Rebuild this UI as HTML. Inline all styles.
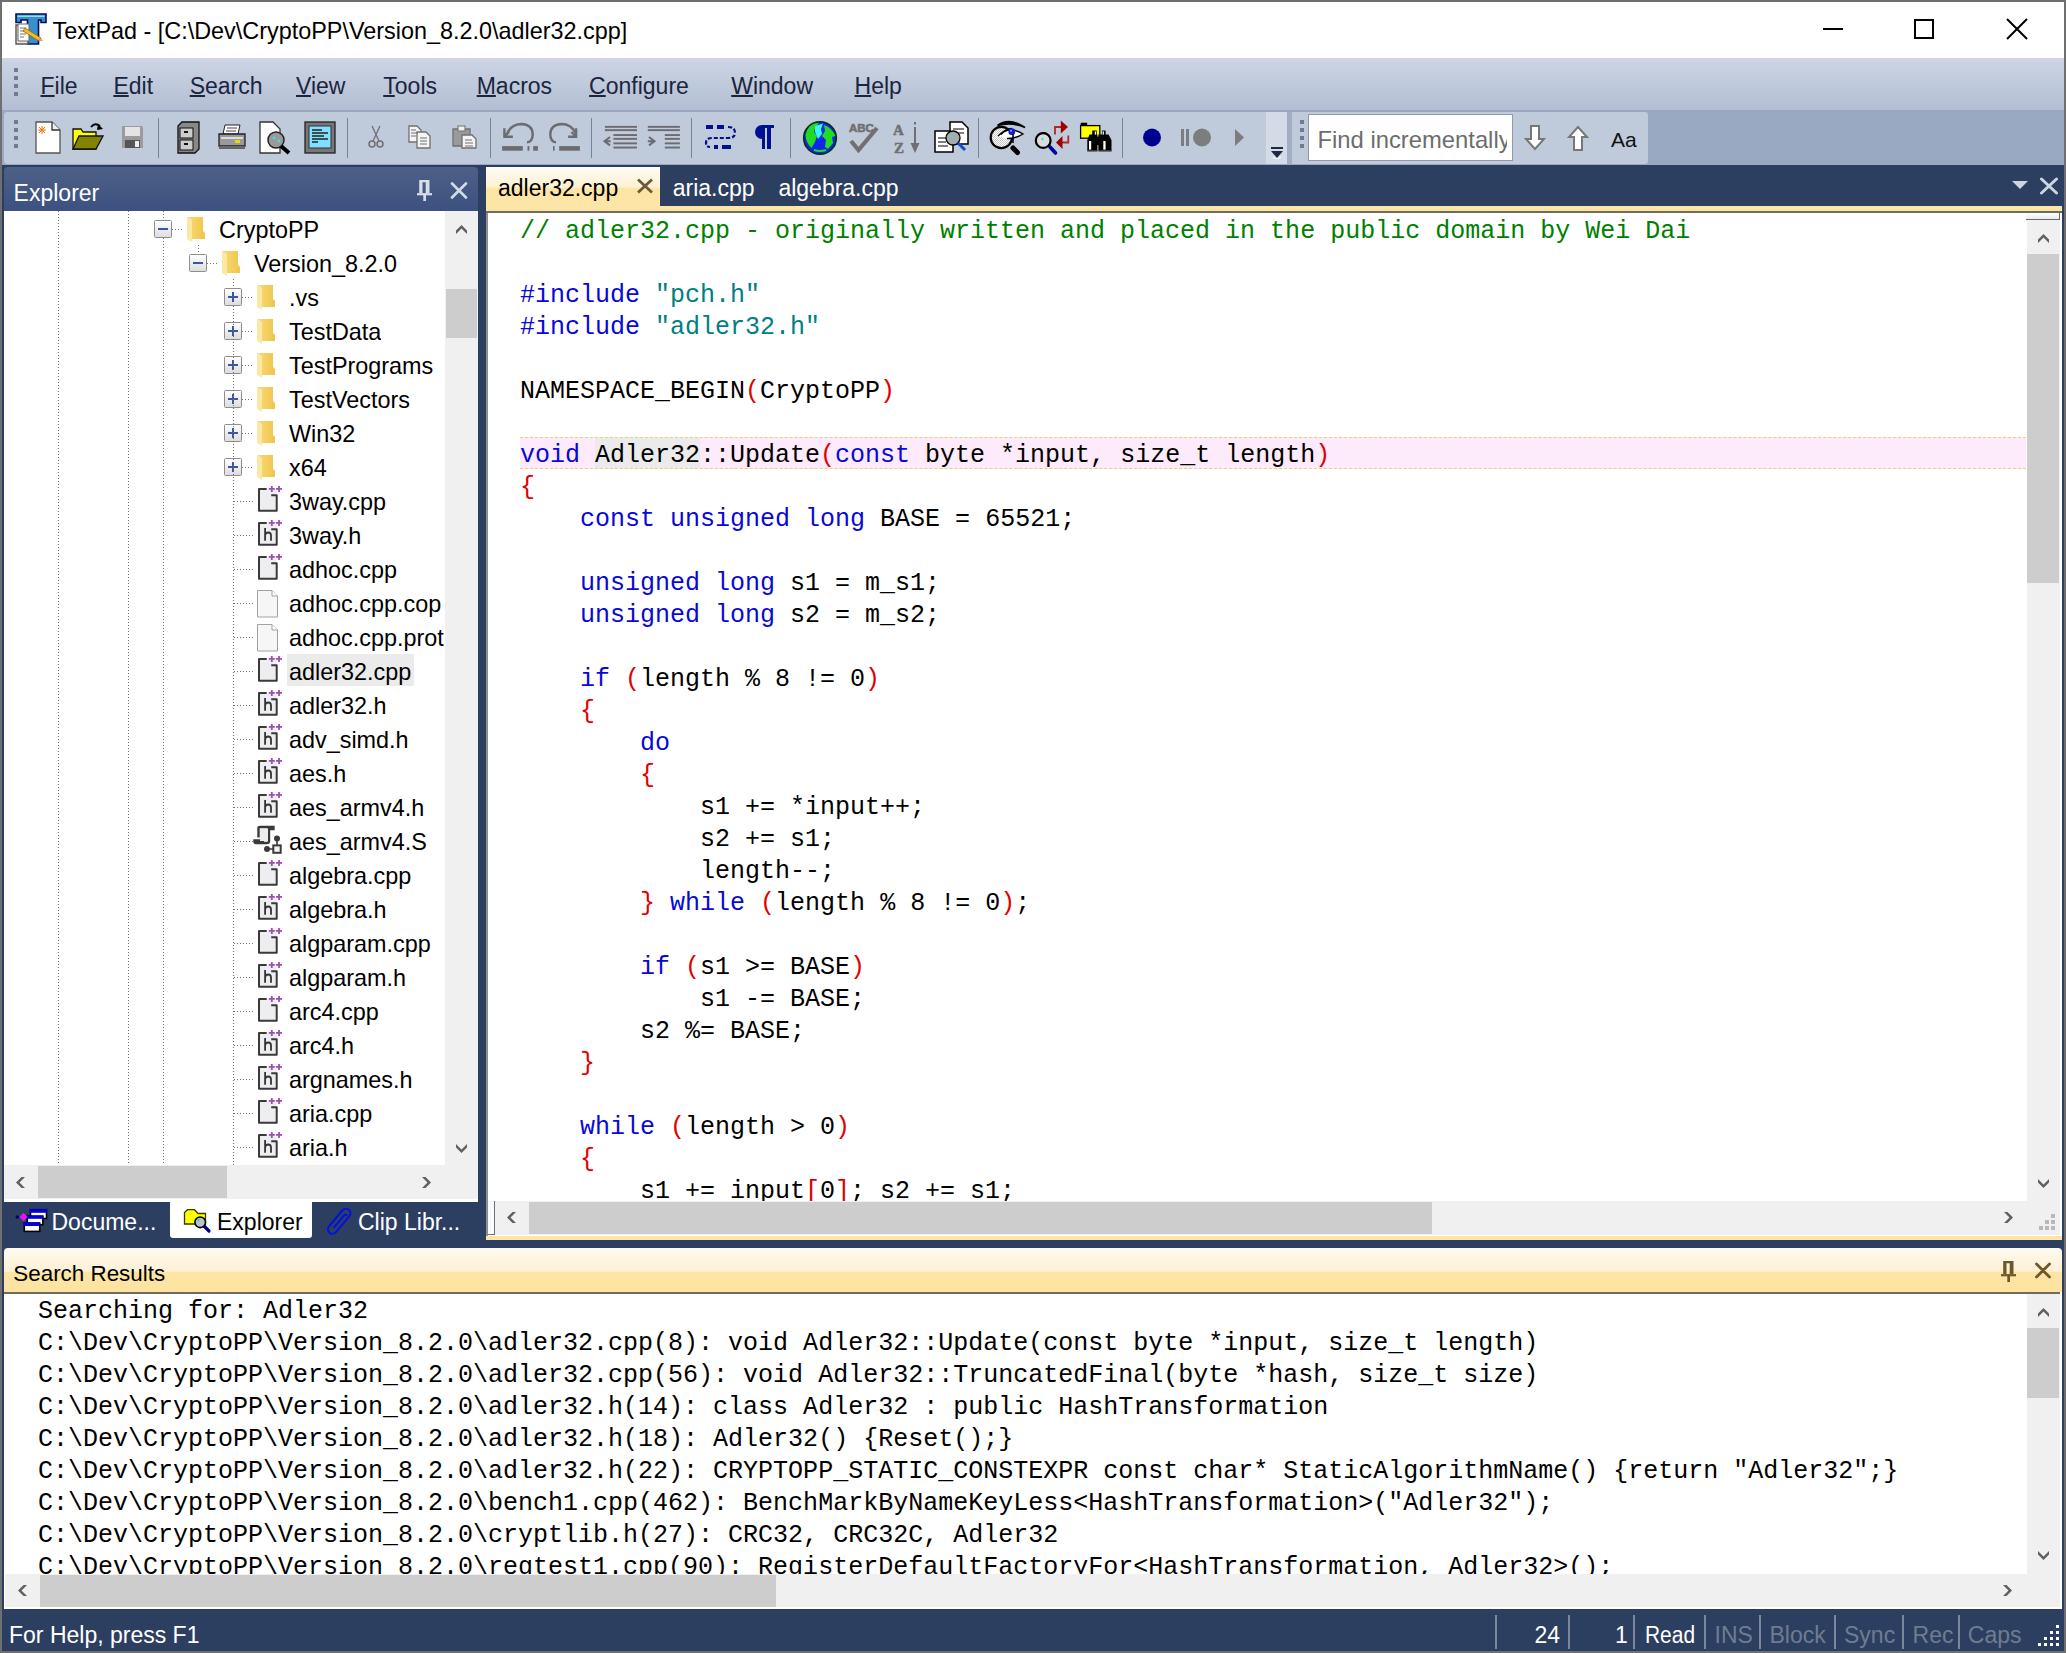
<!DOCTYPE html><html><head><meta charset="utf-8"><style>
*{margin:0;padding:0;box-sizing:border-box}
html,body{width:2066px;height:1653px;overflow:hidden;background:#6f6f6f;font-family:"Liberation Sans",sans-serif;position:relative}
div,svg.a{position:absolute}
.t{white-space:pre;line-height:1}
.mono{font-family:"Liberation Mono",monospace;font-size:25px;white-space:pre;line-height:32px;color:#000}
.kw{color:#0808d8}.cm{color:#008000}.st{color:#008080}.br{color:#e00000}
</style></head><body>
<div style="left:2px;top:2px;width:2062px;height:1649px;background:#2d3f61;"></div>
<div style="left:2px;top:2px;width:2062px;height:56px;background:#fff;"></div>
<svg class="a" style="left:15px;top:13px;" width="32" height="32" viewBox="0 0 32 32">
<path d="M1 1H31V9.5H26V7H23.5V31H12.5V7H6V9.5H1Z" fill="#3a8fd0" stroke="#001060" stroke-width="1.6"/>
<path d="M2.5 2.5H29.5V4H2.5Z" fill="#8fe0ff"/>
<path d="M1 12H13V31H1Z" fill="#e8e8e8" stroke="#555" stroke-width="1.4"/>
<path d="M3 11H14V28H3Z" fill="#fff" stroke="#666" stroke-width="1"/>
<path d="M5 15H11M5 18H10M5 21H11M5 24H9" stroke="#777" stroke-width="1"/>
<path d="M10 15L26 25L24 28L8 18Z" fill="#f0c020" stroke="#a06000" stroke-width="0.8"/>
<path d="M26 25L28 28L24 28Z" fill="#f09090"/>
</svg>
<div class="t " style="left:52.5px;top:19.69px;font-size:23.4px;color:#000;">TextPad - [C:\Dev\CryptoPP\Version_8.2.0\adler32.cpp]</div>
<div style="left:1823px;top:28px;width:20px;height:2px;background:#000;"></div>
<div style="left:1914px;top:19px;width:20px;height:20px;background:transparent;border:2px solid #000"></div>
<svg class="a" style="left:2006px;top:18px;" width="22" height="22" viewBox="0 0 22 22"><path d="M1 1L21 21M21 1L1 21" stroke="#000" stroke-width="2"/></svg>
<div style="left:2px;top:58px;width:2062px;height:52px;background:linear-gradient(#cbd5e4,#b3bed3);"></div>
<div style="left:14px;top:68px;width:4px;height:4px;background:#6d7b93;"></div>
<div style="left:14px;top:76px;width:4px;height:4px;background:#6d7b93;"></div>
<div style="left:14px;top:84px;width:4px;height:4px;background:#6d7b93;"></div>
<div style="left:14px;top:92px;width:4px;height:4px;background:#6d7b93;"></div>
<div class="t " style="left:40.5px;top:74.53px;font-size:23px;color:#1b2540;"><u style="text-decoration-thickness:1.6px;text-underline-offset:1px;text-decoration-skip-ink:none">F</u>ile</div>
<div class="t " style="left:113.4px;top:74.53px;font-size:23px;color:#1b2540;"><u style="text-decoration-thickness:1.6px;text-underline-offset:1px;text-decoration-skip-ink:none">E</u>dit</div>
<div class="t " style="left:189.7px;top:74.53px;font-size:23px;color:#1b2540;"><u style="text-decoration-thickness:1.6px;text-underline-offset:1px;text-decoration-skip-ink:none">S</u>earch</div>
<div class="t " style="left:296px;top:74.53px;font-size:23px;color:#1b2540;"><u style="text-decoration-thickness:1.6px;text-underline-offset:1px;text-decoration-skip-ink:none">V</u>iew</div>
<div class="t " style="left:383.3px;top:74.53px;font-size:23px;color:#1b2540;"><u style="text-decoration-thickness:1.6px;text-underline-offset:1px;text-decoration-skip-ink:none">T</u>ools</div>
<div class="t " style="left:476.7px;top:74.53px;font-size:23px;color:#1b2540;"><u style="text-decoration-thickness:1.6px;text-underline-offset:1px;text-decoration-skip-ink:none">M</u>acros</div>
<div class="t " style="left:589.1px;top:74.53px;font-size:23px;color:#1b2540;"><u style="text-decoration-thickness:1.6px;text-underline-offset:1px;text-decoration-skip-ink:none">C</u>onfigure</div>
<div class="t " style="left:731.2px;top:74.53px;font-size:23px;color:#1b2540;"><u style="text-decoration-thickness:1.6px;text-underline-offset:1px;text-decoration-skip-ink:none">W</u>indow</div>
<div class="t " style="left:854.6px;top:74.53px;font-size:23px;color:#1b2540;"><u style="text-decoration-thickness:1.6px;text-underline-offset:1px;text-decoration-skip-ink:none">H</u>elp</div>
<div style="left:2px;top:110px;width:2062px;height:55px;background:#9aa9c2;"></div>
<div style="left:4px;top:112px;width:1262px;height:52px;background:#bfcadb;border-radius:3px 0 0 3px"></div>
<div style="left:1266px;top:112px;width:21px;height:52px;background:#d3dbe7;"></div>
<div style="left:1287px;top:112px;width:5px;height:52px;background:#a2aec3;"></div>
<div style="left:1292px;top:112px;width:356px;height:52px;background:#bfcadb;border-radius:0 3px 3px 0"></div>
<div style="left:14px;top:120px;width:4px;height:4px;background:#6d7b93;"></div>
<div style="left:1300px;top:120px;width:4px;height:4px;background:#6d7b93;"></div>
<div style="left:14px;top:128px;width:4px;height:4px;background:#6d7b93;"></div>
<div style="left:1300px;top:128px;width:4px;height:4px;background:#6d7b93;"></div>
<div style="left:14px;top:136px;width:4px;height:4px;background:#6d7b93;"></div>
<div style="left:1300px;top:136px;width:4px;height:4px;background:#6d7b93;"></div>
<div style="left:14px;top:144px;width:4px;height:4px;background:#6d7b93;"></div>
<div style="left:1300px;top:144px;width:4px;height:4px;background:#6d7b93;"></div>
<div style="left:158px;top:118px;width:1px;height:40px;background:#76839a;"></div>
<div style="left:347px;top:118px;width:1px;height:40px;background:#76839a;"></div>
<div style="left:490px;top:118px;width:1px;height:40px;background:#76839a;"></div>
<div style="left:591px;top:118px;width:1px;height:40px;background:#76839a;"></div>
<div style="left:691px;top:118px;width:1px;height:40px;background:#76839a;"></div>
<div style="left:790px;top:118px;width:1px;height:40px;background:#76839a;"></div>
<div style="left:978px;top:118px;width:1px;height:40px;background:#76839a;"></div>
<div style="left:1122px;top:118px;width:1px;height:40px;background:#76839a;"></div>
<svg class="a" style="left:35px;top:121px;" width="26" height="33" viewBox="0 0 26 33"><path d="M1 1H17L25 9V32H1Z" fill="#fff" stroke="#555" stroke-width="1.3"/><path d="M17 1V9H25" fill="#eee" stroke="#333" stroke-width="1.3"/><path d="M4 6L10 12M10 6L4 12M7 5V13M3 9H11" stroke="#f07000" stroke-width="1"/></svg>
<svg class="a" style="left:72px;top:121px;" width="32" height="32" viewBox="0 0 32 32"><path d="M1 8H9L11 11H24V28H1Z" fill="#ffff00" stroke="#111" stroke-width="1.3"/><path d="M1 28L7 15H31L24 28Z" fill="#848400" stroke="#111" stroke-width="1.3"/><path d="M19 6Q23 1 28 5" fill="none" stroke="#000" stroke-width="2"/><path d="M26 3L31 8L25 9Z" fill="#000"/></svg>
<svg class="a" style="left:121px;top:125px;" width="23" height="24" viewBox="0 0 23 24"><path d="M1 1H21L22 3V23H1Z" fill="#9b9b9b"/><rect x="4" y="2" width="15" height="9" fill="#e4e4e4"/><rect x="4" y="15" width="15" height="8" fill="#555"/><rect x="14" y="16" width="4" height="6" fill="#eee"/></svg>
<svg class="a" style="left:177px;top:121px;" width="23" height="33" viewBox="0 0 23 33"><path d="M1 5L5 1H22V28L18 32H1Z" fill="#888" stroke="#111" stroke-width="1.3"/><rect x="3" y="7" width="13" height="10" fill="#ccc" stroke="#111"/><rect x="3" y="19" width="13" height="10" fill="#ccc" stroke="#111"/><path d="M7 11H11M7 23H11" stroke="#111" stroke-width="2"/></svg>
<svg class="a" style="left:218px;top:124px;" width="28" height="26" viewBox="0 0 28 26"><path d="M7 1H22L20 10H5Z" fill="#fff" stroke="#222"/><path d="M9 4H19M8 7H18" stroke="#444"/><path d="M1 10H27V22H1Z" fill="#999" stroke="#222" stroke-width="1.3"/><path d="M3 14H25" stroke="#ddd" stroke-width="2"/><rect x="17" y="16" width="5" height="3" fill="#e0e000"/><path d="M1 22H27V25H1Z" fill="#666"/></svg>
<svg class="a" style="left:259px;top:121px;" width="34" height="34" viewBox="0 0 34 34"><path d="M1 1H14L21 8V32H1Z" fill="#fff" stroke="#333" stroke-width="1.3"/><circle cx="17" cy="19" r="8" fill="#9a9a9a" stroke="#222" stroke-width="1.5"/><path d="M14 16L16 18M19 19L21 21" stroke="#40e0e0" stroke-width="2"/><path d="M22 25L30 32" stroke="#000" stroke-width="4"/></svg>
<svg class="a" style="left:304px;top:121px;" width="32" height="33" viewBox="0 0 32 33"><rect x="1" y="1" width="30" height="31" fill="#777" stroke="#222" stroke-width="1.3"/><rect x="5" y="5" width="22" height="22" fill="#80e0ff" stroke="#333"/><path d="M8 9H18M8 12H24M8 15H20M8 18H24M8 21H14" stroke="#222" stroke-width="1.5"/></svg>
<svg class="a" style="left:368px;top:125px;" width="16" height="24" viewBox="0 0 16 24"><path d="M4 1L11 16M12 1L5 16" stroke="#707070" stroke-width="1.3" fill="none"/><circle cx="4" cy="19" r="3" fill="none" stroke="#707070" stroke-width="1.5"/><circle cx="12" cy="19" r="3" fill="none" stroke="#707070" stroke-width="1.5"/></svg>
<svg class="a" style="left:408px;top:125px;" width="24" height="24" viewBox="0 0 24 24"><path d="M1 1H9L13 5V17H1Z" fill="#f4f4f4" stroke="#707070" stroke-width="1.3"/><path d="M9 7H18L22 11V23H9Z" fill="#f4f4f4" stroke="#707070" stroke-width="1.3"/><path d="M3 5H8M3 8H10M3 11H8M12 13H19M12 16H19M12 19H19" stroke="#707070"/></svg>
<svg class="a" style="left:452px;top:125px;" width="25" height="24" viewBox="0 0 25 24"><path d="M1 4H18V21H1Z" fill="#9a9a9a" stroke="#707070" stroke-width="1.3" rx="2"/><rect x="6" y="1" width="7" height="5" fill="#eee" stroke="#707070"/><path d="M10 10H20L24 14V23H10Z" fill="#f4f4f4" stroke="#707070" stroke-width="1.3"/><path d="M13 15H20M13 18H21M13 21H21" stroke="#707070"/></svg>
<svg class="a" style="left:495px;top:115px;" width="195" height="45" viewBox="0 0 195 45"><g fill="none" stroke="#6c6c70" stroke-width="2.4"><path d="M12.3 18Q17 9 26.5 9Q37.5 9.5 37.7 19.5Q37.5 27 32 27.4"/><path d="M9.4 13.2V21.7H17.9M9.4 21.7L14 17"/><path d="M80.7 18Q76 9 66.5 9Q55.5 9.5 55.3 19.5Q55.5 27 61 27.4"/><path d="M81.1 13.2V21.7H73.1M81.1 21.7L76.5 17"/></g><g fill="#6c6c70"><rect x="7.1" y="31.1" width="20.7" height="4.6"/><rect x="32.5" y="31.1" width="1.9" height="4.6"/><rect x="38.2" y="31.1" width="4.7" height="4.6"/><rect x="64.2" y="31.1" width="20.7" height="4.6"/><rect x="58" y="31.1" width="1.6" height="4.6"/><rect x="109.9" y="10.9" width="32.1" height="1.9"/><rect x="109.9" y="14.2" width="32.1" height="1.9"/><rect x="118.4" y="19.1" width="23.6" height="1.9"/><rect x="118.4" y="22.9" width="23.6" height="1.9"/><rect x="118.4" y="27.4" width="23.6" height="1.9"/><rect x="118.4" y="31.6" width="23.6" height="1.9"/><rect x="152.8" y="10.9" width="32.1" height="1.9"/><rect x="152.8" y="14.2" width="32.1" height="1.9"/><rect x="169.8" y="19.1" width="15.1" height="1.9"/><rect x="169.8" y="22.9" width="15.1" height="1.9"/><rect x="169.8" y="27.4" width="15.1" height="1.9"/><rect x="169.8" y="31.6" width="15.1" height="1.9"/></g><g fill="none" stroke="#6c6c70" stroke-width="2"><path d="M115 22L109.5 26.2L115 30.4M109.5 26.2H115.6"/><path d="M154 22L159.5 26.2L154 30.4M152.8 26.2H159.5"/></g></svg>
<svg class="a" style="left:704px;top:124px;" width="33" height="26" viewBox="0 0 33 26"><path d="M2 3H9M13 3H20" stroke="#001090" stroke-width="4"/><path d="M24 3Q31 3 31 9Q31 14 24 14H8Q2 14 2 19Q2 23 6 23" fill="none" stroke="#001090" stroke-width="2.2" stroke-dasharray="4 2"/><path d="M10 23H14M18 23H27" stroke="#001090" stroke-width="4"/></svg>
<svg class="a" style="left:753px;top:124px;" width="22" height="26" viewBox="0 0 22 26"><path d="M9 1H21V4H18V25H14V4H12V25H9V15A7 7 0 0 1 9 1Z" fill="#001090"/></svg>
<svg class="a" style="left:802px;top:120px;" width="36" height="36" viewBox="0 0 36 36"><circle cx="18" cy="18" r="16.3" fill="#0c28e8" stroke="#063008" stroke-width="1.6"/><path d="M3.5 15Q5 7 12 3.5L17 3L13 8L12 12L15 16L13 22L9.5 28Q4 23 3.5 15Z" fill="#22dc22"/><path d="M13 6L21 3.5L19 9L20 14L16 19L13 12Z" fill="#38f4f4"/><path d="M22 5Q30 8 33.5 16L30 17L31 23L26 29L23 27L24 20L20 16L23 11Z" fill="#22dc22"/><path d="M12 30Q18 32 24 30" stroke="#22dc22" stroke-width="2" fill="none"/></svg>
<svg class="a" style="left:848px;top:121px;" width="31" height="32" viewBox="0 0 31 32"><text x="1" y="11" font-family="Liberation Sans" font-weight="700" font-size="11.5" fill="#707070" stroke="#707070" stroke-width="0.6">ABC</text><path d="M3 20L10.5 29L29 7" fill="none" stroke="#707070" stroke-width="4.2"/></svg>
<svg class="a" style="left:893px;top:121px;" width="29" height="34" viewBox="0 0 29 34"><text x="0" y="14" font-family="Liberation Serif" font-weight="700" font-size="15" fill="#707070" stroke="#707070" stroke-width="0.5">A</text><text x="1" y="32" font-family="Liberation Serif" font-weight="700" font-size="15" fill="#707070" stroke="#707070" stroke-width="0.5">Z</text><path d="M22 1V3.5M22 6V28" stroke="#707070" stroke-width="2"/><path d="M17.5 22H26.5L22 32Z" fill="#707070"/></svg>
<svg class="a" style="left:934px;top:121px;" width="36" height="32" viewBox="0 0 36 32"><path d="M16 1H28L34 7V23H16Z" fill="#fff" stroke="#000" stroke-width="1.5"/><path d="M19 8H30M19 12H30" stroke="#000"/><path d="M1 10H16L19 13V31H1Z" fill="#fff" stroke="#000" stroke-width="1.5"/><path d="M4 17H14M4 21H12M4 25H14" stroke="#000"/><circle cx="19" cy="17" r="7" fill="#aaa" stroke="#000" stroke-width="1.3"/><path d="M17 15L19 17" stroke="#40e0e0" stroke-width="2"/><path d="M24 22L31 29" stroke="#1050d0" stroke-width="3"/></svg>
<svg class="a" style="left:985px;top:115px;" width="135" height="45" viewBox="0 0 135 45"><defs><pattern id="chk" width="2" height="2" patternUnits="userSpaceOnUse"><rect width="2" height="2" fill="#fff"/><rect width="1" height="1" fill="#c8c8c8"/><rect x="1" y="1" width="1" height="1" fill="#c8c8c8"/></pattern></defs><circle cx="16.3" cy="22.5" r="10.6" fill="url(#chk)" stroke="#000" stroke-width="2.2"/><path d="M13 21Q24 10 38 19Q30 24 22 23.5" fill="#fff" stroke="#000" stroke-width="1.4"/><path d="M16 19.5Q20 14 27 13.5" fill="none" stroke="#000" stroke-width="1.6"/><path d="M12.5 10.5Q24 2 40 12.4Q26 6.5 12.5 10.5Z" fill="#000" stroke="#000" stroke-width="1.6"/><circle cx="26.8" cy="16.7" r="3.4" fill="#1020d0"/><circle cx="26" cy="15.8" r="1" fill="#a0b0ff"/><path d="M28 19V28" stroke="#000" stroke-width="1.6"/><path d="M28 33L32.5 37.5" stroke="#000" stroke-width="5" stroke-linecap="round"/><path d="M65 32L70.5 38" stroke="#0000a0" stroke-width="3.6" stroke-linecap="round"/><circle cx="58.2" cy="25.5" r="7.4" fill="#dcdcdc" stroke="#000" stroke-width="2.2"/><rect x="56.5" y="17" width="4" height="1.8" fill="#000"/><circle cx="57.5" cy="24" r="1.3" fill="#40e0e8"/><path d="M70 19.5V12H76.5" fill="none" stroke="#b02828" stroke-width="1.8"/><path d="M75.8 5.5L83 12L75.8 18.5Z" fill="#a00000"/><path d="M83.3 20.5V27.5H77" fill="none" stroke="#b02828" stroke-width="1.8"/><path d="M77.5 21L71 27.5L77.5 34Z" fill="#a00000"/><path d="M96 23.5V10.5H101.5V8.5H96.5V10.5" fill="none" stroke="#000" stroke-width="1.3"/><rect x="95.6" y="10.6" width="19.2" height="12.6" fill="#ffff00" stroke="#000" stroke-width="1.3"/><rect x="95.8" y="8.2" width="6" height="2.6" fill="#000"/><path d="M107.2 15.4H111.8V19.6H112.4V36.3H102.3V25L104.5 19.6H107.2Z" fill="#000"/><path d="M117 15.4H120.6V19.6H123.5L126.5 25V36.3H113.4V19.6H117Z" fill="#000"/><rect x="112" y="21.6" width="2" height="8.4" fill="#000"/><rect x="104" y="26" width="2.2" height="8.6" fill="#fff"/><rect x="109.8" y="16.4" width="1.3" height="3.2" fill="#fff"/><rect x="118.3" y="26" width="2.3" height="8.6" fill="#fff"/><rect x="117.6" y="16.4" width="1.3" height="3.2" fill="#fff"/><rect x="102.3" y="35.3" width="10" height="1.2" fill="#555"/><rect x="113.4" y="35.3" width="13" height="1.2" fill="#555"/></svg>
<svg class="a" style="left:1142px;top:128px;" width="20" height="19" viewBox="0 0 20 19"><circle cx="10" cy="9.5" r="9" fill="#000090"/></svg>
<svg class="a" style="left:1180px;top:128px;" width="32" height="19" viewBox="0 0 32 19"><rect x="1" y="1" width="3" height="17" fill="#7d7d7d"/><rect x="6" y="1" width="3" height="17" fill="#7d7d7d"/><circle cx="22" cy="9.5" r="9" fill="#7d7d7d"/></svg>
<svg class="a" style="left:1234px;top:128px;" width="11" height="19" viewBox="0 0 11 19"><path d="M1 1L10 9.5L1 18Z" fill="#7d7d7d"/></svg>
<svg class="a" style="left:1270px;top:146px;" width="14" height="13" viewBox="0 0 14 13"><rect x="1" y="1" width="12" height="2" fill="#1d2a44"/><path d="M1 5H13L7 12Z" fill="#1d2a44"/><path d="M3 11L7 13L11 11" stroke="#fff" fill="none"/></svg>
<div style="left:1308px;top:114px;width:205px;height:47px;background:#fff;border:1.5px solid #8f9aab"></div>
<div style="left:1309px;top:116px;width:198px;height:44px;overflow:hidden">
<div class="t" style="left:8.5px;top:11.85px;font-size:23.8px;color:#6d6d6d">Find incrementally</div>
</div>
<svg class="a" style="left:1524px;top:125px;" width="22" height="26" viewBox="0 0 22 26"><path d="M7 1H15V14H20L11 24L2 14H7Z" fill="#fff" stroke="#777" stroke-width="2"/></svg>
<svg class="a" style="left:1567px;top:125px;" width="22" height="26" viewBox="0 0 22 26"><path d="M7 25H15V12H20L11 2L2 12H7Z" fill="#fff" stroke="#777" stroke-width="2"/></svg>
<div class="t " style="left:1611px;top:129.22px;font-size:21px;color:#111;">Aa</div>
<div style="left:4px;top:167px;width:474px;height:44px;background:linear-gradient(#4d6087,#3c5180);border-radius:4px 4px 0 0"></div>
<div class="t " style="left:13.6px;top:181.53px;font-size:23px;color:#fff;">Explorer</div>
<svg class="a" style="left:416.8px;top:180px;" width="16" height="22" viewBox="0 0 16 22"><path d="M2.2 0H12.5V13.1H2.2ZM5.5 2.3V13.1H8.7V2.3Z" fill="#d6dee8" fill-rule="evenodd"/><rect x="0" y="13.1" width="15" height="2.2" fill="#d6dee8"/><rect x="6.3" y="15" width="2.7" height="6" fill="#d6dee8"/></svg>
<svg class="a" style="left:450px;top:182px;" width="18" height="17" viewBox="0 0 18 17"><path d="M2 1.5L16 15.5M16 1.5L2 15.5" stroke="#d3dbe6" stroke-width="2.6" stroke-linecap="round"/></svg>
<div style="left:4px;top:211px;width:441px;height:954px;background:#fff;"></div>
<div style="left:58px;top:211px;width:1px;height:954px;background:repeating-linear-gradient(#707070 0 1px,transparent 1px 3px);"></div>
<div style="left:128px;top:211px;width:1px;height:954px;background:repeating-linear-gradient(#707070 0 1px,transparent 1px 3px);"></div>
<div style="left:163px;top:211px;width:1px;height:9px;background:repeating-linear-gradient(#707070 0 1px,transparent 1px 3px);"></div>
<div style="left:163px;top:238px;width:1px;height:927px;background:repeating-linear-gradient(#707070 0 1px,transparent 1px 3px);"></div>
<div style="left:198px;top:245px;width:1px;height:9px;background:repeating-linear-gradient(#707070 0 1px,transparent 1px 3px);"></div>
<div style="left:233px;top:279px;width:1px;height:9px;background:repeating-linear-gradient(#707070 0 1px,transparent 1px 3px);"></div>
<svg class="a" style="left:154px;top:220px;" width="18" height="18" viewBox="0 0 18 18"><defs><linearGradient id="eg" x1="0" y1="0" x2="0" y2="1"><stop offset="0" stop-color="#fff"/><stop offset="1" stop-color="#dcdcdc"/></linearGradient></defs><rect x="0.5" y="0.5" width="17" height="17" rx="1" fill="url(#eg)" stroke="#8e8e8e"/><rect x="4" y="8" width="10" height="2" fill="#3a58a0"/></svg>
<div style="left:172px;top:229px;width:10px;height:1px;background:repeating-linear-gradient(90deg,#707070 0 1px,transparent 1px 3px);"></div>
<svg class="a" style="left:186px;top:216px;" width="20" height="27" viewBox="0 0 20 27"><defs><linearGradient id="fg" x1="0" y1="0" x2="1" y2="0"><stop offset="0" stop-color="#f6d66e"/><stop offset="1" stop-color="#f0c44c"/></linearGradient></defs><path d="M5 1H17V15L19 17V23H5Z" fill="url(#fg)"/><path d="M1 1L6 4V26L1 23Z" fill="#fbe7a6"/><path d="M1 1H5L6 4" fill="#f3d58a"/></svg>
<div class="t " style="left:219px;top:219.19px;font-size:23.4px;color:#000;max-width:226px;overflow:hidden">CryptoPP</div>
<svg class="a" style="left:189px;top:254px;" width="18" height="18" viewBox="0 0 18 18"><defs><linearGradient id="eg" x1="0" y1="0" x2="0" y2="1"><stop offset="0" stop-color="#fff"/><stop offset="1" stop-color="#dcdcdc"/></linearGradient></defs><rect x="0.5" y="0.5" width="17" height="17" rx="1" fill="url(#eg)" stroke="#8e8e8e"/><rect x="4" y="8" width="10" height="2" fill="#3a58a0"/></svg>
<div style="left:207px;top:263px;width:11px;height:1px;background:repeating-linear-gradient(90deg,#707070 0 1px,transparent 1px 3px);"></div>
<svg class="a" style="left:221px;top:250px;" width="20" height="27" viewBox="0 0 20 27"><defs><linearGradient id="fg" x1="0" y1="0" x2="1" y2="0"><stop offset="0" stop-color="#f6d66e"/><stop offset="1" stop-color="#f0c44c"/></linearGradient></defs><path d="M5 1H17V15L19 17V23H5Z" fill="url(#fg)"/><path d="M1 1L6 4V26L1 23Z" fill="#fbe7a6"/><path d="M1 1H5L6 4" fill="#f3d58a"/></svg>
<div class="t " style="left:254px;top:253.19px;font-size:23.4px;color:#000;max-width:191px;overflow:hidden">Version_8.2.0</div>
<svg class="a" style="left:224px;top:288px;" width="18" height="18" viewBox="0 0 18 18"><defs><linearGradient id="eg" x1="0" y1="0" x2="0" y2="1"><stop offset="0" stop-color="#fff"/><stop offset="1" stop-color="#dcdcdc"/></linearGradient></defs><rect x="0.5" y="0.5" width="17" height="17" rx="1" fill="url(#eg)" stroke="#8e8e8e"/><rect x="4" y="8" width="10" height="2" fill="#3a58a0"/><rect x="8" y="4" width="2" height="10" fill="#3a58a0"/></svg>
<div style="left:242px;top:297px;width:11px;height:1px;background:repeating-linear-gradient(90deg,#707070 0 1px,transparent 1px 3px);"></div>
<svg class="a" style="left:256px;top:284px;" width="20" height="27" viewBox="0 0 20 27"><defs><linearGradient id="fg" x1="0" y1="0" x2="1" y2="0"><stop offset="0" stop-color="#f6d66e"/><stop offset="1" stop-color="#f0c44c"/></linearGradient></defs><path d="M5 1H17V15L19 17V23H5Z" fill="url(#fg)"/><path d="M1 1L6 4V26L1 23Z" fill="#fbe7a6"/><path d="M1 1H5L6 4" fill="#f3d58a"/></svg>
<div class="t " style="left:289px;top:287.19px;font-size:23.4px;color:#000;max-width:156px;overflow:hidden">.vs</div>
<svg class="a" style="left:224px;top:322px;" width="18" height="18" viewBox="0 0 18 18"><defs><linearGradient id="eg" x1="0" y1="0" x2="0" y2="1"><stop offset="0" stop-color="#fff"/><stop offset="1" stop-color="#dcdcdc"/></linearGradient></defs><rect x="0.5" y="0.5" width="17" height="17" rx="1" fill="url(#eg)" stroke="#8e8e8e"/><rect x="4" y="8" width="10" height="2" fill="#3a58a0"/><rect x="8" y="4" width="2" height="10" fill="#3a58a0"/></svg>
<div style="left:242px;top:331px;width:11px;height:1px;background:repeating-linear-gradient(90deg,#707070 0 1px,transparent 1px 3px);"></div>
<svg class="a" style="left:256px;top:318px;" width="20" height="27" viewBox="0 0 20 27"><defs><linearGradient id="fg" x1="0" y1="0" x2="1" y2="0"><stop offset="0" stop-color="#f6d66e"/><stop offset="1" stop-color="#f0c44c"/></linearGradient></defs><path d="M5 1H17V15L19 17V23H5Z" fill="url(#fg)"/><path d="M1 1L6 4V26L1 23Z" fill="#fbe7a6"/><path d="M1 1H5L6 4" fill="#f3d58a"/></svg>
<div class="t " style="left:289px;top:321.19px;font-size:23.4px;color:#000;max-width:156px;overflow:hidden">TestData</div>
<svg class="a" style="left:224px;top:356px;" width="18" height="18" viewBox="0 0 18 18"><defs><linearGradient id="eg" x1="0" y1="0" x2="0" y2="1"><stop offset="0" stop-color="#fff"/><stop offset="1" stop-color="#dcdcdc"/></linearGradient></defs><rect x="0.5" y="0.5" width="17" height="17" rx="1" fill="url(#eg)" stroke="#8e8e8e"/><rect x="4" y="8" width="10" height="2" fill="#3a58a0"/><rect x="8" y="4" width="2" height="10" fill="#3a58a0"/></svg>
<div style="left:242px;top:365px;width:11px;height:1px;background:repeating-linear-gradient(90deg,#707070 0 1px,transparent 1px 3px);"></div>
<svg class="a" style="left:256px;top:352px;" width="20" height="27" viewBox="0 0 20 27"><defs><linearGradient id="fg" x1="0" y1="0" x2="1" y2="0"><stop offset="0" stop-color="#f6d66e"/><stop offset="1" stop-color="#f0c44c"/></linearGradient></defs><path d="M5 1H17V15L19 17V23H5Z" fill="url(#fg)"/><path d="M1 1L6 4V26L1 23Z" fill="#fbe7a6"/><path d="M1 1H5L6 4" fill="#f3d58a"/></svg>
<div class="t " style="left:289px;top:355.19px;font-size:23.4px;color:#000;max-width:156px;overflow:hidden">TestPrograms</div>
<svg class="a" style="left:224px;top:390px;" width="18" height="18" viewBox="0 0 18 18"><defs><linearGradient id="eg" x1="0" y1="0" x2="0" y2="1"><stop offset="0" stop-color="#fff"/><stop offset="1" stop-color="#dcdcdc"/></linearGradient></defs><rect x="0.5" y="0.5" width="17" height="17" rx="1" fill="url(#eg)" stroke="#8e8e8e"/><rect x="4" y="8" width="10" height="2" fill="#3a58a0"/><rect x="8" y="4" width="2" height="10" fill="#3a58a0"/></svg>
<div style="left:242px;top:399px;width:11px;height:1px;background:repeating-linear-gradient(90deg,#707070 0 1px,transparent 1px 3px);"></div>
<svg class="a" style="left:256px;top:386px;" width="20" height="27" viewBox="0 0 20 27"><defs><linearGradient id="fg" x1="0" y1="0" x2="1" y2="0"><stop offset="0" stop-color="#f6d66e"/><stop offset="1" stop-color="#f0c44c"/></linearGradient></defs><path d="M5 1H17V15L19 17V23H5Z" fill="url(#fg)"/><path d="M1 1L6 4V26L1 23Z" fill="#fbe7a6"/><path d="M1 1H5L6 4" fill="#f3d58a"/></svg>
<div class="t " style="left:289px;top:389.19px;font-size:23.4px;color:#000;max-width:156px;overflow:hidden">TestVectors</div>
<svg class="a" style="left:224px;top:424px;" width="18" height="18" viewBox="0 0 18 18"><defs><linearGradient id="eg" x1="0" y1="0" x2="0" y2="1"><stop offset="0" stop-color="#fff"/><stop offset="1" stop-color="#dcdcdc"/></linearGradient></defs><rect x="0.5" y="0.5" width="17" height="17" rx="1" fill="url(#eg)" stroke="#8e8e8e"/><rect x="4" y="8" width="10" height="2" fill="#3a58a0"/><rect x="8" y="4" width="2" height="10" fill="#3a58a0"/></svg>
<div style="left:242px;top:433px;width:11px;height:1px;background:repeating-linear-gradient(90deg,#707070 0 1px,transparent 1px 3px);"></div>
<svg class="a" style="left:256px;top:420px;" width="20" height="27" viewBox="0 0 20 27"><defs><linearGradient id="fg" x1="0" y1="0" x2="1" y2="0"><stop offset="0" stop-color="#f6d66e"/><stop offset="1" stop-color="#f0c44c"/></linearGradient></defs><path d="M5 1H17V15L19 17V23H5Z" fill="url(#fg)"/><path d="M1 1L6 4V26L1 23Z" fill="#fbe7a6"/><path d="M1 1H5L6 4" fill="#f3d58a"/></svg>
<div class="t " style="left:289px;top:423.19px;font-size:23.4px;color:#000;max-width:156px;overflow:hidden">Win32</div>
<svg class="a" style="left:224px;top:458px;" width="18" height="18" viewBox="0 0 18 18"><defs><linearGradient id="eg" x1="0" y1="0" x2="0" y2="1"><stop offset="0" stop-color="#fff"/><stop offset="1" stop-color="#dcdcdc"/></linearGradient></defs><rect x="0.5" y="0.5" width="17" height="17" rx="1" fill="url(#eg)" stroke="#8e8e8e"/><rect x="4" y="8" width="10" height="2" fill="#3a58a0"/><rect x="8" y="4" width="2" height="10" fill="#3a58a0"/></svg>
<div style="left:242px;top:467px;width:11px;height:1px;background:repeating-linear-gradient(90deg,#707070 0 1px,transparent 1px 3px);"></div>
<svg class="a" style="left:256px;top:454px;" width="20" height="27" viewBox="0 0 20 27"><defs><linearGradient id="fg" x1="0" y1="0" x2="1" y2="0"><stop offset="0" stop-color="#f6d66e"/><stop offset="1" stop-color="#f0c44c"/></linearGradient></defs><path d="M5 1H17V15L19 17V23H5Z" fill="url(#fg)"/><path d="M1 1L6 4V26L1 23Z" fill="#fbe7a6"/><path d="M1 1H5L6 4" fill="#f3d58a"/></svg>
<div class="t " style="left:289px;top:457.19px;font-size:23.4px;color:#000;max-width:156px;overflow:hidden">x64</div>
<div style="left:234px;top:501px;width:19px;height:1px;background:repeating-linear-gradient(90deg,#707070 0 1px,transparent 1px 3px);"></div>
<svg class="a" style="left:256px;top:485px;" width="28" height="30" viewBox="0 0 28 30"><rect x="3" y="4" width="17.7" height="21.7" fill="#eeeef1"/><path d="M10.7 4H3V25.7H20.7V10.2H15.2" fill="none" stroke="#3a3a3a" stroke-width="2" stroke-linejoin="round"/><path d="M12.8 3.9H18.8M15.8 0.9V6.9M20 3.9H26M23 0.9V6.9" stroke="#9b4fae" stroke-width="1.8"/></svg>
<div class="t " style="left:289px;top:491.19px;font-size:23.4px;color:#000;max-width:156px;overflow:hidden">3way.cpp</div>
<div style="left:234px;top:535px;width:19px;height:1px;background:repeating-linear-gradient(90deg,#707070 0 1px,transparent 1px 3px);"></div>
<svg class="a" style="left:256px;top:519px;" width="28" height="30" viewBox="0 0 28 30"><rect x="3" y="4" width="17.7" height="21.7" fill="#eeeef1"/><path d="M10.7 4H3V25.7H20.7V10.2H15.2" fill="none" stroke="#3a3a3a" stroke-width="2" stroke-linejoin="round"/><path d="M12.8 3.9H18.8M15.8 0.9V6.9M20 3.9H26M23 0.9V6.9" stroke="#9b4fae" stroke-width="1.8"/><path d="M9.1 9V21.7M9.1 16Q9.5 13.5 12.3 13.5Q15 13.5 15 16.5V21.7" fill="none" stroke="#333" stroke-width="1.8"/></svg>
<div class="t " style="left:289px;top:525.19px;font-size:23.4px;color:#000;max-width:156px;overflow:hidden">3way.h</div>
<div style="left:234px;top:569px;width:19px;height:1px;background:repeating-linear-gradient(90deg,#707070 0 1px,transparent 1px 3px);"></div>
<svg class="a" style="left:256px;top:553px;" width="28" height="30" viewBox="0 0 28 30"><rect x="3" y="4" width="17.7" height="21.7" fill="#eeeef1"/><path d="M10.7 4H3V25.7H20.7V10.2H15.2" fill="none" stroke="#3a3a3a" stroke-width="2" stroke-linejoin="round"/><path d="M12.8 3.9H18.8M15.8 0.9V6.9M20 3.9H26M23 0.9V6.9" stroke="#9b4fae" stroke-width="1.8"/></svg>
<div class="t " style="left:289px;top:559.19px;font-size:23.4px;color:#000;max-width:156px;overflow:hidden">adhoc.cpp</div>
<div style="left:234px;top:603px;width:19px;height:1px;background:repeating-linear-gradient(90deg,#707070 0 1px,transparent 1px 3px);"></div>
<svg class="a" style="left:257px;top:590px;" width="22" height="28" viewBox="0 0 22 28"><path d="M0.5 0.5H15L20.5 6V27H0.5Z" fill="#f6f6f6" stroke="#a2a2a2"/><path d="M15 0.5V6H20.5" fill="#fff" stroke="#a2a2a2"/></svg>
<div class="t " style="left:289px;top:593.19px;font-size:23.4px;color:#000;max-width:156px;overflow:hidden">adhoc.cpp.cop</div>
<div style="left:234px;top:637px;width:19px;height:1px;background:repeating-linear-gradient(90deg,#707070 0 1px,transparent 1px 3px);"></div>
<svg class="a" style="left:257px;top:624px;" width="22" height="28" viewBox="0 0 22 28"><path d="M0.5 0.5H15L20.5 6V27H0.5Z" fill="#f6f6f6" stroke="#a2a2a2"/><path d="M15 0.5V6H20.5" fill="#fff" stroke="#a2a2a2"/></svg>
<div class="t " style="left:289px;top:627.19px;font-size:23.4px;color:#000;max-width:156px;overflow:hidden">adhoc.cpp.prot</div>
<div style="left:234px;top:671px;width:19px;height:1px;background:repeating-linear-gradient(90deg,#707070 0 1px,transparent 1px 3px);"></div>
<svg class="a" style="left:256px;top:655px;" width="28" height="30" viewBox="0 0 28 30"><rect x="3" y="4" width="17.7" height="21.7" fill="#eeeef1"/><path d="M10.7 4H3V25.7H20.7V10.2H15.2" fill="none" stroke="#3a3a3a" stroke-width="2" stroke-linejoin="round"/><path d="M12.8 3.9H18.8M15.8 0.9V6.9M20 3.9H26M23 0.9V6.9" stroke="#9b4fae" stroke-width="1.8"/></svg>
<div style="left:287px;top:654px;width:127px;height:32px;background:#ebebeb;"></div>
<div class="t " style="left:289px;top:661.19px;font-size:23.4px;color:#000;max-width:156px;overflow:hidden">adler32.cpp</div>
<div style="left:234px;top:705px;width:19px;height:1px;background:repeating-linear-gradient(90deg,#707070 0 1px,transparent 1px 3px);"></div>
<svg class="a" style="left:256px;top:689px;" width="28" height="30" viewBox="0 0 28 30"><rect x="3" y="4" width="17.7" height="21.7" fill="#eeeef1"/><path d="M10.7 4H3V25.7H20.7V10.2H15.2" fill="none" stroke="#3a3a3a" stroke-width="2" stroke-linejoin="round"/><path d="M12.8 3.9H18.8M15.8 0.9V6.9M20 3.9H26M23 0.9V6.9" stroke="#9b4fae" stroke-width="1.8"/><path d="M9.1 9V21.7M9.1 16Q9.5 13.5 12.3 13.5Q15 13.5 15 16.5V21.7" fill="none" stroke="#333" stroke-width="1.8"/></svg>
<div class="t " style="left:289px;top:695.19px;font-size:23.4px;color:#000;max-width:156px;overflow:hidden">adler32.h</div>
<div style="left:234px;top:739px;width:19px;height:1px;background:repeating-linear-gradient(90deg,#707070 0 1px,transparent 1px 3px);"></div>
<svg class="a" style="left:256px;top:723px;" width="28" height="30" viewBox="0 0 28 30"><rect x="3" y="4" width="17.7" height="21.7" fill="#eeeef1"/><path d="M10.7 4H3V25.7H20.7V10.2H15.2" fill="none" stroke="#3a3a3a" stroke-width="2" stroke-linejoin="round"/><path d="M12.8 3.9H18.8M15.8 0.9V6.9M20 3.9H26M23 0.9V6.9" stroke="#9b4fae" stroke-width="1.8"/><path d="M9.1 9V21.7M9.1 16Q9.5 13.5 12.3 13.5Q15 13.5 15 16.5V21.7" fill="none" stroke="#333" stroke-width="1.8"/></svg>
<div class="t " style="left:289px;top:729.19px;font-size:23.4px;color:#000;max-width:156px;overflow:hidden">adv_simd.h</div>
<div style="left:234px;top:773px;width:19px;height:1px;background:repeating-linear-gradient(90deg,#707070 0 1px,transparent 1px 3px);"></div>
<svg class="a" style="left:256px;top:757px;" width="28" height="30" viewBox="0 0 28 30"><rect x="3" y="4" width="17.7" height="21.7" fill="#eeeef1"/><path d="M10.7 4H3V25.7H20.7V10.2H15.2" fill="none" stroke="#3a3a3a" stroke-width="2" stroke-linejoin="round"/><path d="M12.8 3.9H18.8M15.8 0.9V6.9M20 3.9H26M23 0.9V6.9" stroke="#9b4fae" stroke-width="1.8"/><path d="M9.1 9V21.7M9.1 16Q9.5 13.5 12.3 13.5Q15 13.5 15 16.5V21.7" fill="none" stroke="#333" stroke-width="1.8"/></svg>
<div class="t " style="left:289px;top:763.19px;font-size:23.4px;color:#000;max-width:156px;overflow:hidden">aes.h</div>
<div style="left:234px;top:807px;width:19px;height:1px;background:repeating-linear-gradient(90deg,#707070 0 1px,transparent 1px 3px);"></div>
<svg class="a" style="left:256px;top:791px;" width="28" height="30" viewBox="0 0 28 30"><rect x="3" y="4" width="17.7" height="21.7" fill="#eeeef1"/><path d="M10.7 4H3V25.7H20.7V10.2H15.2" fill="none" stroke="#3a3a3a" stroke-width="2" stroke-linejoin="round"/><path d="M12.8 3.9H18.8M15.8 0.9V6.9M20 3.9H26M23 0.9V6.9" stroke="#9b4fae" stroke-width="1.8"/><path d="M9.1 9V21.7M9.1 16Q9.5 13.5 12.3 13.5Q15 13.5 15 16.5V21.7" fill="none" stroke="#333" stroke-width="1.8"/></svg>
<div class="t " style="left:289px;top:797.19px;font-size:23.4px;color:#000;max-width:156px;overflow:hidden">aes_armv4.h</div>
<div style="left:234px;top:841px;width:19px;height:1px;background:repeating-linear-gradient(90deg,#707070 0 1px,transparent 1px 3px);"></div>
<svg class="a" style="left:250px;top:820px;" width="34" height="36" viewBox="0 0 34 36"><path d="M8.5 17.5V8Q8.5 7 10 7H23.5V9H19V21Q19 23 17 23H6Q4.5 23 4.5 21.5V20.5H14" fill="none" stroke="#3a3a3a" stroke-width="2.4"/><rect x="10" y="9" width="8" height="12" fill="#ededf0"/><circle cx="27" cy="18.6" r="3" fill="#3a3a3a"/><path d="M27 21V25M19 29H23" stroke="#3a3a3a" stroke-width="1.6"/><circle cx="17" cy="29" r="3" fill="#3a3a3a"/><rect x="23.3" y="25.4" width="7.4" height="7.4" fill="#f4f4f4" stroke="#3a3a3a" stroke-width="2"/></svg>
<div class="t " style="left:289px;top:831.19px;font-size:23.4px;color:#000;max-width:156px;overflow:hidden">aes_armv4.S</div>
<div style="left:234px;top:875px;width:19px;height:1px;background:repeating-linear-gradient(90deg,#707070 0 1px,transparent 1px 3px);"></div>
<svg class="a" style="left:256px;top:859px;" width="28" height="30" viewBox="0 0 28 30"><rect x="3" y="4" width="17.7" height="21.7" fill="#eeeef1"/><path d="M10.7 4H3V25.7H20.7V10.2H15.2" fill="none" stroke="#3a3a3a" stroke-width="2" stroke-linejoin="round"/><path d="M12.8 3.9H18.8M15.8 0.9V6.9M20 3.9H26M23 0.9V6.9" stroke="#9b4fae" stroke-width="1.8"/></svg>
<div class="t " style="left:289px;top:865.19px;font-size:23.4px;color:#000;max-width:156px;overflow:hidden">algebra.cpp</div>
<div style="left:234px;top:909px;width:19px;height:1px;background:repeating-linear-gradient(90deg,#707070 0 1px,transparent 1px 3px);"></div>
<svg class="a" style="left:256px;top:893px;" width="28" height="30" viewBox="0 0 28 30"><rect x="3" y="4" width="17.7" height="21.7" fill="#eeeef1"/><path d="M10.7 4H3V25.7H20.7V10.2H15.2" fill="none" stroke="#3a3a3a" stroke-width="2" stroke-linejoin="round"/><path d="M12.8 3.9H18.8M15.8 0.9V6.9M20 3.9H26M23 0.9V6.9" stroke="#9b4fae" stroke-width="1.8"/><path d="M9.1 9V21.7M9.1 16Q9.5 13.5 12.3 13.5Q15 13.5 15 16.5V21.7" fill="none" stroke="#333" stroke-width="1.8"/></svg>
<div class="t " style="left:289px;top:899.19px;font-size:23.4px;color:#000;max-width:156px;overflow:hidden">algebra.h</div>
<div style="left:234px;top:943px;width:19px;height:1px;background:repeating-linear-gradient(90deg,#707070 0 1px,transparent 1px 3px);"></div>
<svg class="a" style="left:256px;top:927px;" width="28" height="30" viewBox="0 0 28 30"><rect x="3" y="4" width="17.7" height="21.7" fill="#eeeef1"/><path d="M10.7 4H3V25.7H20.7V10.2H15.2" fill="none" stroke="#3a3a3a" stroke-width="2" stroke-linejoin="round"/><path d="M12.8 3.9H18.8M15.8 0.9V6.9M20 3.9H26M23 0.9V6.9" stroke="#9b4fae" stroke-width="1.8"/></svg>
<div class="t " style="left:289px;top:933.19px;font-size:23.4px;color:#000;max-width:156px;overflow:hidden">algparam.cpp</div>
<div style="left:234px;top:977px;width:19px;height:1px;background:repeating-linear-gradient(90deg,#707070 0 1px,transparent 1px 3px);"></div>
<svg class="a" style="left:256px;top:961px;" width="28" height="30" viewBox="0 0 28 30"><rect x="3" y="4" width="17.7" height="21.7" fill="#eeeef1"/><path d="M10.7 4H3V25.7H20.7V10.2H15.2" fill="none" stroke="#3a3a3a" stroke-width="2" stroke-linejoin="round"/><path d="M12.8 3.9H18.8M15.8 0.9V6.9M20 3.9H26M23 0.9V6.9" stroke="#9b4fae" stroke-width="1.8"/><path d="M9.1 9V21.7M9.1 16Q9.5 13.5 12.3 13.5Q15 13.5 15 16.5V21.7" fill="none" stroke="#333" stroke-width="1.8"/></svg>
<div class="t " style="left:289px;top:967.19px;font-size:23.4px;color:#000;max-width:156px;overflow:hidden">algparam.h</div>
<div style="left:234px;top:1011px;width:19px;height:1px;background:repeating-linear-gradient(90deg,#707070 0 1px,transparent 1px 3px);"></div>
<svg class="a" style="left:256px;top:995px;" width="28" height="30" viewBox="0 0 28 30"><rect x="3" y="4" width="17.7" height="21.7" fill="#eeeef1"/><path d="M10.7 4H3V25.7H20.7V10.2H15.2" fill="none" stroke="#3a3a3a" stroke-width="2" stroke-linejoin="round"/><path d="M12.8 3.9H18.8M15.8 0.9V6.9M20 3.9H26M23 0.9V6.9" stroke="#9b4fae" stroke-width="1.8"/></svg>
<div class="t " style="left:289px;top:1001.19px;font-size:23.4px;color:#000;max-width:156px;overflow:hidden">arc4.cpp</div>
<div style="left:234px;top:1045px;width:19px;height:1px;background:repeating-linear-gradient(90deg,#707070 0 1px,transparent 1px 3px);"></div>
<svg class="a" style="left:256px;top:1029px;" width="28" height="30" viewBox="0 0 28 30"><rect x="3" y="4" width="17.7" height="21.7" fill="#eeeef1"/><path d="M10.7 4H3V25.7H20.7V10.2H15.2" fill="none" stroke="#3a3a3a" stroke-width="2" stroke-linejoin="round"/><path d="M12.8 3.9H18.8M15.8 0.9V6.9M20 3.9H26M23 0.9V6.9" stroke="#9b4fae" stroke-width="1.8"/><path d="M9.1 9V21.7M9.1 16Q9.5 13.5 12.3 13.5Q15 13.5 15 16.5V21.7" fill="none" stroke="#333" stroke-width="1.8"/></svg>
<div class="t " style="left:289px;top:1035.19px;font-size:23.4px;color:#000;max-width:156px;overflow:hidden">arc4.h</div>
<div style="left:234px;top:1079px;width:19px;height:1px;background:repeating-linear-gradient(90deg,#707070 0 1px,transparent 1px 3px);"></div>
<svg class="a" style="left:256px;top:1063px;" width="28" height="30" viewBox="0 0 28 30"><rect x="3" y="4" width="17.7" height="21.7" fill="#eeeef1"/><path d="M10.7 4H3V25.7H20.7V10.2H15.2" fill="none" stroke="#3a3a3a" stroke-width="2" stroke-linejoin="round"/><path d="M12.8 3.9H18.8M15.8 0.9V6.9M20 3.9H26M23 0.9V6.9" stroke="#9b4fae" stroke-width="1.8"/><path d="M9.1 9V21.7M9.1 16Q9.5 13.5 12.3 13.5Q15 13.5 15 16.5V21.7" fill="none" stroke="#333" stroke-width="1.8"/></svg>
<div class="t " style="left:289px;top:1069.19px;font-size:23.4px;color:#000;max-width:156px;overflow:hidden">argnames.h</div>
<div style="left:234px;top:1113px;width:19px;height:1px;background:repeating-linear-gradient(90deg,#707070 0 1px,transparent 1px 3px);"></div>
<svg class="a" style="left:256px;top:1097px;" width="28" height="30" viewBox="0 0 28 30"><rect x="3" y="4" width="17.7" height="21.7" fill="#eeeef1"/><path d="M10.7 4H3V25.7H20.7V10.2H15.2" fill="none" stroke="#3a3a3a" stroke-width="2" stroke-linejoin="round"/><path d="M12.8 3.9H18.8M15.8 0.9V6.9M20 3.9H26M23 0.9V6.9" stroke="#9b4fae" stroke-width="1.8"/></svg>
<div class="t " style="left:289px;top:1103.19px;font-size:23.4px;color:#000;max-width:156px;overflow:hidden">aria.cpp</div>
<div style="left:234px;top:1147px;width:19px;height:1px;background:repeating-linear-gradient(90deg,#707070 0 1px,transparent 1px 3px);"></div>
<svg class="a" style="left:256px;top:1131px;" width="28" height="30" viewBox="0 0 28 30"><rect x="3" y="4" width="17.7" height="21.7" fill="#eeeef1"/><path d="M10.7 4H3V25.7H20.7V10.2H15.2" fill="none" stroke="#3a3a3a" stroke-width="2" stroke-linejoin="round"/><path d="M12.8 3.9H18.8M15.8 0.9V6.9M20 3.9H26M23 0.9V6.9" stroke="#9b4fae" stroke-width="1.8"/><path d="M9.1 9V21.7M9.1 16Q9.5 13.5 12.3 13.5Q15 13.5 15 16.5V21.7" fill="none" stroke="#333" stroke-width="1.8"/></svg>
<div class="t " style="left:289px;top:1137.19px;font-size:23.4px;color:#000;max-width:156px;overflow:hidden">aria.h</div>
<div style="left:234px;top:1181px;width:19px;height:1px;background:repeating-linear-gradient(90deg,#707070 0 1px,transparent 1px 3px);"></div>
<svg class="a" style="left:256px;top:1165px;" width="28" height="30" viewBox="0 0 28 30"><rect x="3" y="4" width="17.7" height="21.7" fill="#eeeef1"/><path d="M10.7 4H3V25.7H20.7V10.2H15.2" fill="none" stroke="#3a3a3a" stroke-width="2" stroke-linejoin="round"/><path d="M12.8 3.9H18.8M15.8 0.9V6.9M20 3.9H26M23 0.9V6.9" stroke="#9b4fae" stroke-width="1.8"/></svg>
<div style="left:233px;top:306px;width:1px;height:859px;background:repeating-linear-gradient(#707070 0 1px,transparent 1px 3px);"></div>
<div style="left:445px;top:211px;width:33px;height:954px;background:#f0f0f0;"></div>
<div style="left:446px;top:289px;width:31px;height:49px;background:#cdcdcd;"></div>
<svg class="a" style="left:456px;top:225px;" width="11" height="9" viewBox="0 0 11 9"><path d="M0 9V5.5L5.5 0L11 5.5V9L5.5 3.5Z" fill="#606060"/></svg>
<svg class="a" style="left:456px;top:1144px;" width="11" height="9" viewBox="0 0 11 9"><path d="M0 0V3.5L5.5 9L11 3.5V0L5.5 5.5Z" fill="#606060"/></svg>
<div style="left:4px;top:1165px;width:474px;height:34px;background:#f0f0f0;"></div>
<div style="left:38px;top:1166px;width:189px;height:32px;background:#cdcdcd;"></div>
<svg class="a" style="left:16px;top:1177px;" width="9" height="11" viewBox="0 0 9 11"><path d="M9 0H5.5L0 5.5L5.5 11H9L3.5 5.5Z" fill="#606060"/></svg>
<svg class="a" style="left:422px;top:1177px;" width="9" height="11" viewBox="0 0 9 11"><path d="M0 0H3.5L9 5.5L3.5 11H0L5.5 5.5Z" fill="#606060"/></svg>
<div style="left:4px;top:1199px;width:474px;height:3px;background:#fff;"></div>
<svg class="a" style="left:10px;top:1200px;" width="40" height="40" viewBox="0 0 40 40"><rect x="20.5" y="9.7" width="16" height="8.8" fill="#fff" stroke="#000" stroke-width="1.6"/><rect x="19.8" y="9.2" width="17.2" height="3.6" fill="#0000e0"/><rect x="17.3" y="16.1" width="15.6" height="8.6" fill="#fff" stroke="#000" stroke-width="1.6"/><rect x="16.7" y="15.6" width="16.2" height="3.2" fill="#0000e0"/><rect x="14.3" y="23" width="15.4" height="8.4" fill="#fff" stroke="#000" stroke-width="1.6"/><rect x="13.6" y="22.4" width="16.1" height="3.6" fill="#0000e0"/><path d="M13.5 12.8L17.5 17L13.5 21.2L9.5 17Z" fill="#f010f0"/><circle cx="7.3" cy="17" r="1.8" fill="#000070"/></svg>
<div class="t " style="left:51.5px;top:1210.53px;font-size:23px;color:#fff;">Docume...</div>
<div style="left:170px;top:1202px;width:142px;height:36px;background:#fff;border-radius:0 0 3px 3px"></div>
<svg class="a" style="left:175px;top:1200px;" width="40" height="40" viewBox="0 0 40 40"><path d="M9.5 24V12.5L12.5 9.7H19.5L23 13.5H30.5V24Z" fill="#ffff00" stroke="#3a3a00" stroke-width="1.3"/><path d="M29 26L34 31" stroke="#000080" stroke-width="3.2" stroke-linecap="round"/><circle cx="25.2" cy="22.3" r="5.3" fill="#b8c4c8" stroke="#000" stroke-width="1.6"/><path d="M22.5 20.5L24.5 19.5" stroke="#50c8d8" stroke-width="2"/></svg>
<div class="t " style="left:217px;top:1210.53px;font-size:23px;color:#000;">Explorer</div>
<svg class="a" style="left:315px;top:1200px;" width="40" height="40" viewBox="0 0 40 40"><g transform="rotate(-50 24 21)"><rect x="9" y="16.8" width="30" height="9" rx="4.5" fill="none" stroke="#0010e0" stroke-width="2"/><path d="M15 21.3H31Q33.5 21.3 33.5 23.8" fill="none" stroke="#0010e0" stroke-width="2"/></g></svg>
<div class="t " style="left:358px;top:1210.53px;font-size:23px;color:#fff;">Clip Libr...</div>
<div style="left:486px;top:167px;width:174px;height:44px;background:linear-gradient(#fffcf4 0%,#fdf1d2 45%,#fde4a4 50%,#fde6aa 100%);"></div>
<div class="t " style="left:498px;top:176.53px;font-size:23px;color:#000;">adler32.cpp</div>
<svg class="a" style="left:636px;top:178px;" width="18" height="16" viewBox="0 0 18 16"><path d="M2 1.5L16 14.5M16 1.5L2 14.5" stroke="#6b5a38" stroke-width="2.8"/></svg>
<div class="t " style="left:672.7px;top:176.53px;font-size:23px;color:#fff;">aria.cpp</div>
<div class="t " style="left:778.4px;top:176.53px;font-size:23px;color:#fff;">algebra.cpp</div>
<svg class="a" style="left:2011px;top:180px;" width="18" height="10" viewBox="0 0 18 10"><path d="M1 1H17L9 9Z" fill="#cdd5e2"/></svg>
<svg class="a" style="left:2039px;top:177px;" width="20" height="18" viewBox="0 0 20 18"><path d="M2.5 2L17.5 16M17.5 2L2.5 16" stroke="#cdd5e2" stroke-width="3" stroke-linecap="round"/></svg>
<div style="left:486px;top:206px;width:1576px;height:5px;background:#fde5a6;"></div>
<div style="left:486px;top:211px;width:1576px;height:2px;background:#6e6b5f;"></div>
<div style="left:486px;top:213px;width:2px;height:1023px;background:#8f8f8f;"></div>
<div style="left:488px;top:213px;width:1574px;height:1023px;background:#fff;"></div>
<div style="left:520px;top:437px;width:1506px;height:32px;background:#fdeafb;border-top:1px dashed #e4d27e;border-bottom:1px dashed #e4d27e"></div>
<div style="left:595px;top:438px;width:105px;height:30px;background:#ebebeb;"></div>
<div style="left:488px;top:213px;width:1539px;height:988px;overflow:hidden">
<div class="mono" style="left:32px;top:3px"><span class="cm">// adler32.cpp - originally written and placed in the public domain by Wei Dai</span>

<span class="kw">#include</span> <span class="st">"pch.h"</span>
<span class="kw">#include</span> <span class="st">"adler32.h"</span>

NAMESPACE_BEGIN<span class="br">(</span>CryptoPP<span class="br">)</span>

<span class="kw">void</span> Adler32::Update<span class="br">(</span><span class="kw">const</span> byte *input, size_t length<span class="br">)</span>
<span class="br">{</span>
    <span class="kw">const</span> <span class="kw">unsigned</span> <span class="kw">long</span> BASE = 65521;

    <span class="kw">unsigned</span> <span class="kw">long</span> s1 = m_s1;
    <span class="kw">unsigned</span> <span class="kw">long</span> s2 = m_s2;

    <span class="kw">if</span> <span class="br">(</span>length % 8 != 0<span class="br">)</span>
    <span class="br">{</span>
        <span class="kw">do</span>
        <span class="br">{</span>
            s1 += *input++;
            s2 += s1;
            length--;
        <span class="br">}</span> <span class="kw">while</span> <span class="br">(</span>length % 8 != 0<span class="br">)</span>;

        <span class="kw">if</span> <span class="br">(</span>s1 &gt;= BASE<span class="br">)</span>
            s1 -= BASE;
        s2 %= BASE;
    <span class="br">}</span>

    <span class="kw">while</span> <span class="br">(</span>length &gt; 0<span class="br">)</span>
    <span class="br">{</span>
        s1 += input<span class="br">[</span>0<span class="br">]</span>; s2 += s1;</div>
</div>
<div style="left:2027px;top:220px;width:33px;height:981px;background:#f0f0f0;"></div>
<div style="left:2026px;top:213px;width:34px;height:7px;background:linear-gradient(#fff,#e8ecf0);border:1.5px solid #6a6a6a;border-top:none;border-left:none"></div>
<div style="left:2027px;top:254px;width:32px;height:329px;background:#cdcdcd;"></div>
<svg class="a" style="left:2038px;top:234px;" width="11" height="9" viewBox="0 0 11 9"><path d="M0 9V5.5L5.5 0L11 5.5V9L5.5 3.5Z" fill="#606060"/></svg>
<svg class="a" style="left:2038px;top:1179px;" width="11" height="9" viewBox="0 0 11 9"><path d="M0 0V3.5L5.5 9L11 3.5V0L5.5 5.5Z" fill="#606060"/></svg>
<div style="left:488px;top:1201px;width:1572px;height:34px;background:#f0f0f0;"></div>
<div style="left:488px;top:1201px;width:7px;height:34px;background:#fafafa;border:1px solid #707070;border-left:none;border-top:none"></div>
<div style="left:529px;top:1202px;width:903px;height:32px;background:#cdcdcd;"></div>
<svg class="a" style="left:507px;top:1212px;" width="9" height="11" viewBox="0 0 9 11"><path d="M9 0H5.5L0 5.5L5.5 11H9L3.5 5.5Z" fill="#606060"/></svg>
<svg class="a" style="left:2004px;top:1212px;" width="9" height="11" viewBox="0 0 9 11"><path d="M0 0H3.5L9 5.5L3.5 11H0L5.5 5.5Z" fill="#606060"/></svg>
<div style="left:2051px;top:1214px;width:4px;height:4px;background:#b8b8b8;"></div>
<div style="left:2045px;top:1220px;width:4px;height:4px;background:#b8b8b8;"></div>
<div style="left:2051px;top:1220px;width:4px;height:4px;background:#b8b8b8;"></div>
<div style="left:2039px;top:1226px;width:4px;height:4px;background:#b8b8b8;"></div>
<div style="left:2045px;top:1226px;width:4px;height:4px;background:#b8b8b8;"></div>
<div style="left:2051px;top:1226px;width:4px;height:4px;background:#b8b8b8;"></div>
<div style="left:486px;top:1236px;width:1576px;height:4px;background:#fde5a6;"></div>
<div style="left:4px;top:1248px;width:2058px;height:44px;background:linear-gradient(#fffaf0 0%,#fdf0d4 53%,#fde5a4 55%,#fde3a0 100%);border-radius:4px 4px 0 0"></div>
<div class="t " style="left:13.3px;top:1262.54px;font-size:22.4px;color:#000;">Search Results</div>
<svg class="a" style="left:2001px;top:1261px;" width="16" height="22" viewBox="0 0 16 22"><path d="M2.2 0H12.5V13.1H2.2ZM5.5 2.3V13.1H8.7V2.3Z" fill="#6e5828" fill-rule="evenodd"/><rect x="0" y="13.1" width="15" height="2.2" fill="#6e5828"/><rect x="6.3" y="15" width="2.7" height="6" fill="#6e5828"/></svg>
<svg class="a" style="left:2034px;top:1262px;" width="18" height="17" viewBox="0 0 18 17"><path d="M2.5 2L15.5 15M15.5 2L2.5 15" stroke="#6e5828" stroke-width="2.8" stroke-linecap="round"/></svg>
<div style="left:4px;top:1292px;width:2058px;height:317px;background:#fff;"></div>
<div style="left:4px;top:1292px;width:2056px;height:2px;background:#6e6b5f;"></div>
<div style="left:4px;top:1294px;width:2023px;height:280px;background:#fff;"></div>
<div style="left:4px;top:1294px;width:2023px;height:280px;overflow:hidden">
<div class="mono" style="left:34px;top:2px">Searching for: Adler32
C:\Dev\CryptoPP\Version_8.2.0\adler32.cpp(8): void Adler32::Update(const byte *input, size_t length)
C:\Dev\CryptoPP\Version_8.2.0\adler32.cpp(56): void Adler32::TruncatedFinal(byte *hash, size_t size)
C:\Dev\CryptoPP\Version_8.2.0\adler32.h(14): class Adler32 : public HashTransformation
C:\Dev\CryptoPP\Version_8.2.0\adler32.h(18): Adler32() {Reset();}
C:\Dev\CryptoPP\Version_8.2.0\adler32.h(22): CRYPTOPP_STATIC_CONSTEXPR const char* StaticAlgorithmName() {return "Adler32";}
C:\Dev\CryptoPP\Version_8.2.0\bench1.cpp(462): BenchMarkByNameKeyLess&lt;HashTransformation&gt;("Adler32");
C:\Dev\CryptoPP\Version_8.2.0\cryptlib.h(27): CRC32, CRC32C, Adler32
C:\Dev\CryptoPP\Version_8.2.0\regtest1.cpp(90): RegisterDefaultFactoryFor&lt;HashTransformation, Adler32&gt;();</div>
</div>
<div style="left:2027px;top:1294px;width:33px;height:280px;background:#f0f0f0;"></div>
<div style="left:2027px;top:1328px;width:32px;height:70px;background:#cdcdcd;"></div>
<svg class="a" style="left:2038px;top:1308px;" width="11" height="9" viewBox="0 0 11 9"><path d="M0 9V5.5L5.5 0L11 5.5V9L5.5 3.5Z" fill="#606060"/></svg>
<svg class="a" style="left:2038px;top:1551px;" width="11" height="9" viewBox="0 0 11 9"><path d="M0 0V3.5L5.5 9L11 3.5V0L5.5 5.5Z" fill="#606060"/></svg>
<div style="left:5px;top:1574px;width:2055px;height:33px;background:#f0f0f0;"></div>
<div style="left:40px;top:1575px;width:736px;height:32px;background:#cdcdcd;"></div>
<svg class="a" style="left:18px;top:1585px;" width="9" height="11" viewBox="0 0 9 11"><path d="M9 0H5.5L0 5.5L5.5 11H9L3.5 5.5Z" fill="#606060"/></svg>
<svg class="a" style="left:2003px;top:1585px;" width="9" height="11" viewBox="0 0 9 11"><path d="M0 0H3.5L9 5.5L3.5 11H0L5.5 5.5Z" fill="#606060"/></svg>
<div class="t " style="left:9px;top:1623.53px;font-size:23px;color:#fff;">For Help, press F1</div>
<div style="left:1495px;top:1615px;width:1.5px;height:34px;background:#7a879d;"></div>
<div style="left:1568px;top:1615px;width:1.5px;height:34px;background:#7a879d;"></div>
<div style="left:1633px;top:1615px;width:1.5px;height:34px;background:#7a879d;"></div>
<div style="left:1704px;top:1615px;width:1.5px;height:34px;background:#7a879d;"></div>
<div style="left:1759px;top:1615px;width:1.5px;height:34px;background:#7a879d;"></div>
<div style="left:1834px;top:1615px;width:1.5px;height:34px;background:#7a879d;"></div>
<div style="left:1902px;top:1615px;width:1.5px;height:34px;background:#7a879d;"></div>
<div style="left:1958px;top:1615px;width:1.5px;height:34px;background:#7a879d;"></div>
<div class="t " style="left:1534.5px;top:1623.53px;font-size:23px;color:#fff;">24</div>
<div class="t " style="left:1615px;top:1623.53px;font-size:23px;color:#fff;">1</div>
<div class="t " style="left:1645.3px;top:1623.53px;font-size:23px;color:#fff;transform:scaleX(0.91);transform-origin:0 0">Read</div>
<div class="t " style="left:1714.5px;top:1623.53px;font-size:23px;color:#6f7c90;">INS</div>
<div class="t " style="left:1769.5px;top:1623.53px;font-size:23px;color:#6f7c90;">Block</div>
<div class="t " style="left:1844px;top:1623.53px;font-size:23px;color:#6f7c90;">Sync</div>
<div class="t " style="left:1912.6px;top:1623.53px;font-size:23px;color:#6f7c90;">Rec</div>
<div class="t " style="left:1967.8px;top:1623.53px;font-size:23px;color:#6f7c90;">Caps</div>
<div style="left:2056px;top:1625px;width:3px;height:3px;background:#fff;"></div>
<div style="left:2050px;top:1631px;width:3px;height:3px;background:#fff;"></div>
<div style="left:2056px;top:1631px;width:3px;height:3px;background:#fff;"></div>
<div style="left:2044px;top:1637px;width:3px;height:3px;background:#fff;"></div>
<div style="left:2050px;top:1637px;width:3px;height:3px;background:#fff;"></div>
<div style="left:2056px;top:1637px;width:3px;height:3px;background:#fff;"></div>
<div style="left:2038px;top:1643px;width:3px;height:3px;background:#fff;"></div>
<div style="left:2044px;top:1643px;width:3px;height:3px;background:#fff;"></div>
<div style="left:2050px;top:1643px;width:3px;height:3px;background:#fff;"></div>
<div style="left:2056px;top:1643px;width:3px;height:3px;background:#fff;"></div>
</body></html>
